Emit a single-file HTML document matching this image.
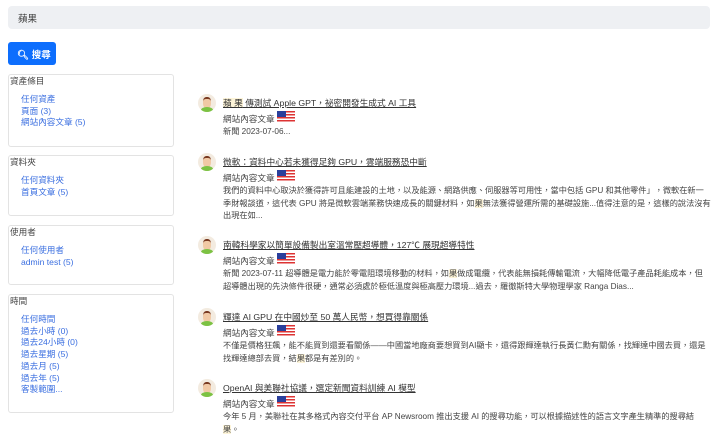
<!DOCTYPE html>
<html><head><meta charset="utf-8"><style>
*{margin:0;padding:0;box-sizing:border-box}
body{width:720px;height:445px;background:#fff;font-family:"Liberation Sans","Noto Sans CJK TC",sans-serif;font-size:8.6px;color:#333;position:relative;overflow:hidden}
.inp{position:absolute;left:8px;top:6px;width:702px;height:23px;background:#eef0f3;border-radius:4px;padding:5px 10px;font-size:9.5px;color:#444}
.btn{position:absolute;left:8px;top:42px;width:48px;height:23px;background:#0d6efd;border-radius:3px;color:#fff;font-size:9.5px;font-weight:bold;padding:5px 0 0 9px}
.box{position:absolute;left:8px;width:166px;border:1px solid #e3e3e3;border-radius:3px}
.box .h{padding:1px 0 0 1px;color:#444;line-height:11px}
.box ul{list-style:none;padding:7px 0 0 12px}
.box li{color:#3b6fe0;line-height:11.7px}
.r{position:absolute;left:198px;width:515px;white-space:nowrap}
.av{position:absolute;left:0;top:-4px;width:18px;height:18px;border-radius:50%;background:#f3ebe0;overflow:hidden}
.av:before{content:"";position:absolute;left:5px;top:3px;width:8px;height:9px;border-radius:40%;background:#f1c9a5;border-top:2px solid #7a3b22}
.av:after{content:"";position:absolute;left:3px;top:13px;width:12px;height:6px;border-radius:50% 50% 0 0;background:#7cc243}
.t{margin-left:25px;text-decoration:underline;color:#333;font-size:8.7px;line-height:11px}
.m{margin-left:25px;line-height:12.5px;color:#444;font-size:8.2px}
.m1{margin-left:25px;line-height:13px;margin-top:2px;color:#444}
.fl{display:inline-block;width:18px;height:12px;vertical-align:-1px;background:repeating-linear-gradient(#d33 0 1.5px,#fff 1.5px 3px);position:relative}
.fl:before{content:"";position:absolute;left:0;top:0;width:9px;height:6px;background:#2a3f9c}
.hl{background:#fdf4d8}
</style></head><body>
<div class="inp">蘋果</div>
<div class="btn">&#x1F50D;&#xFE0E; 搜尋</div>
<div class="box" style="top:74px;height:73px"><div class="h">資產條目</div><ul><li>任何資產</li><li>頁面 (3)</li><li>網站內容文章 (5)</li></ul></div>
<div class="box" style="top:155px;height:61px"><div class="h">資料夾</div><ul><li>任何資料夾</li><li>首頁文章 (5)</li></ul></div>
<div class="box" style="top:225px;height:60px"><div class="h">使用者</div><ul><li>任何使用者</li><li>admin test (5)</li></ul></div>
<div class="box" style="top:294px;height:119px"><div class="h">時間</div><ul><li>任何時間</li><li>過去小時 (0)</li><li>過去24小時 (0)</li><li>過去星期 (5)</li><li>過去月 (5)</li><li>過去年 (5)</li><li>客製範圍...</li></ul></div>

<div class="r" style="top:98px"><div class="av"></div><div class="t"><span class="hl">蘋 果</span> 傳測試 Apple GPT，祕密開發生成式 AI 工具</div><div class="m1">網站內容文章 <span class="fl"></span></div><div class="m">新聞 2023-07-06...</div></div>
<div class="r" style="top:157px"><div class="av"></div><div class="t">微軟：資料中心若未獲得足夠 GPU，雲端服務恐中斷</div><div class="m1">網站內容文章 <span class="fl"></span></div><div class="m">我們的資料中心取決於獲得許可且能建設的土地，以及能源、網路供應、伺服器等可用性，當中包括 GPU 和其他零件」，微軟在新一<br>季財報談道，這代表 GPU 將是微軟雲端業務快速成長的關鍵材料，如<span class="hl">果</span>無法獲得營運所需的基礎設施...值得注意的是，這樣的說法沒有<br>出現在如...</div></div>
<div class="r" style="top:240px"><div class="av"></div><div class="t">南韓科學家以簡單設備製出室溫常壓超導體，127℃ 展現超導特性</div><div class="m1">網站內容文章 <span class="fl"></span></div><div class="m">新聞 2023-07-11 超導體是電力能於零電阻環境移動的材料，如<span class="hl">果</span>做成電纜，代表能無損耗傳輸電流，大幅降低電子產品耗能成本，但<br>超導體出現的先決條件很硬，通常必須處於極低溫度與極高壓力環境...過去，羅徹斯特大學物理學家 Ranga Dias...</div></div>
<div class="r" style="top:312px"><div class="av"></div><div class="t">輝達 AI GPU 在中國炒至 50 萬人民幣，想買得靠關係</div><div class="m1">網站內容文章 <span class="fl"></span></div><div class="m">不僅是價格狂飆，能不能買到還要看關係——中國當地廠商要想買到AI顯卡，還得跟輝達執行長黃仁勳有關係，找輝達中國去買，還是<br>找輝達總部去買，結<span class="hl">果</span>都是有差別的。</div></div>
<div class="r" style="top:383px"><div class="av"></div><div class="t">OpenAI 與美聯社協議，選定新聞資料訓練 AI 模型</div><div class="m1">網站內容文章 <span class="fl"></span></div><div class="m">今年 5 月，美聯社在其多格式內容交付平台 AP Newsroom 推出支援 AI 的搜尋功能，可以根據描述性的語言文字產生精準的搜尋結<br><span class="hl">果</span>。</div></div>
</body></html>
